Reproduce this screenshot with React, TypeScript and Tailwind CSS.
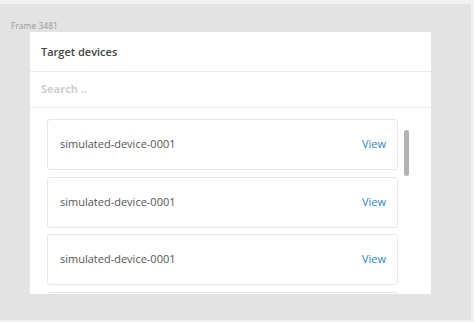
import React from "react";

const font = { fontFamily: '"Open Sans", "Noto Sans", sans-serif' };

export default function App() {
  const devices = ["simulated-device-0001", "simulated-device-0001", "simulated-device-0001", "simulated-device-0001"];
  return (
    <div className="w-[474px] h-[322px] bg-[#f1f1f1] pt-[4px] overflow-hidden" style={font}>
      <div className="w-[471px] h-[316px] bg-[#e3e3e3] flex flex-col">
        <div className="h-[28px] pl-[11px] pt-[17px] text-[8.5px] leading-[10px] text-[#9a9a9a]">Frame 3481</div>
        <div className="ml-[30px] w-[401px] h-[262px] bg-white flex flex-col">
          <div className="h-[40px] border-b border-[#ececec] flex items-center pl-[11px] pt-[2px] text-[11px] font-semibold text-[#444]">
            Target devices
          </div>
          <div className="h-[36px] border-b border-[#ececec] flex items-center pl-[11px] text-[11px] font-bold text-[#cfcfcf]">
            Search ..
          </div>
          <div className="relative flex-1 overflow-hidden">
            <div className="flex flex-col gap-[6.5px] pl-[17px] pt-[11px] w-[368px]">
              {devices.map((d, i) => (
                <div key={i} className="h-[51px] shrink-0 rounded-[3px] border border-[#e6e6e6] flex items-center justify-between pl-[12px] pr-[11px]">
                  <span className="text-[11px] text-[#555]">{d}</span>
                  <span className="text-[11px] text-[#2b87c5]">View</span>
                </div>
              ))}
            </div>
            <div className="absolute left-[374px] top-[22px] w-[5px] h-[46px] rounded-full bg-[#b3b3b3]" />
          </div>
        </div>
      </div>
    </div>
  );
}
